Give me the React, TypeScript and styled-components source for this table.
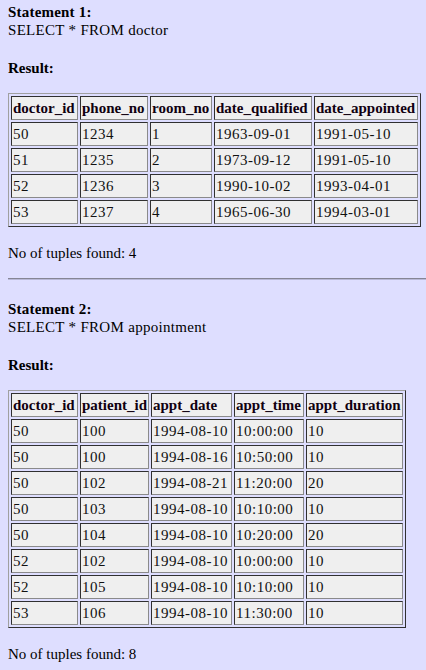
import React from "react";
import styled, { createGlobalStyle } from "styled-components";

const Global = createGlobalStyle`
  html, body {
    margin: 0;
    padding: 0;
    background: #dedeff;
  }
  body {
    font-family: "Liberation Serif", "Times New Roman", serif;
    font-size: 15px;
    line-height: 18px;
    color: #000;
  }
`;

const Page = styled.div`
  padding: 3px 0 0 8px;
`;

const Section = styled.section`
  display: flex;
  flex-direction: column;
  align-items: flex-start;
`;

const Heading = styled.div`
  font-weight: bold;
  letter-spacing: 0.2px;
`;

const Query = styled.div`
  letter-spacing: 0.3px;
`;

const ResultLabel = styled.div`
  font-weight: bold;
  margin-top: 20px;
`;

const Table = styled.table`
  margin-top: 16px;
  border-collapse: separate;
  border-spacing: 2px;
  border-style: solid;
  border-width: 1px;
  border-color: #a0a0a0 #303030 #303030 #a0a0a0;
  background: transparent;
`;

const Cell = styled.td<{ $head?: boolean; $w?: number }>`
  background: #efefef;
  border-style: solid;
  border-width: 1px;
  border-color: #303030 #8a8a8a #8a8a8a #303030;
  padding: 2px 1px;
  height: 18px;
  box-sizing: content-box;
  width: ${(p) => (p.$w ? `${p.$w}px` : "auto")};
  text-align: left;
  white-space: nowrap;
  letter-spacing: ${(p) => (p.$head ? "0" : "0.5px")};
  font-weight: ${(p) => (p.$head ? "bold" : "normal")};
  color: ${(p) => (p.$head ? "#100010" : "#111")};
`;

const Count = styled.div`
  margin-top: 17px;
`;

const Rule = styled.hr`
  align-self: stretch;
  margin: 16px 0 20px 0;
  height: 0;
  border: none;
  border-top: 1px solid #858595;
  border-bottom: 1px solid #b8b8d8;
`;

type Stmt = {
  n: number;
  sql: string;
  cols: string[];
  widths: number[];
  rows: string[][];
};

const statements: Stmt[] = [
  {
    n: 1,
    sql: "SELECT * FROM doctor",
    cols: ["doctor_id", "phone_no", "room_no", "date_qualified", "date_appointed"],
    widths: [63, 64, 58, 94, 100],
    rows: [
      ["50", "1234", "1", "1963-09-01", "1991-05-10"],
      ["51", "1235", "2", "1973-09-12", "1991-05-10"],
      ["52", "1236", "3", "1990-10-02", "1993-04-01"],
      ["53", "1237", "4", "1965-06-30", "1994-03-01"],
    ],
  },
  {
    n: 2,
    sql: "SELECT * FROM appointment",
    cols: ["doctor_id", "patient_id", "appt_date", "appt_time", "appt_duration"],
    widths: [63, 65, 77, 66, 91],
    rows: [
      ["50", "100", "1994-08-10", "10:00:00", "10"],
      ["50", "100", "1994-08-16", "10:50:00", "10"],
      ["50", "102", "1994-08-21", "11:20:00", "20"],
      ["50", "103", "1994-08-10", "10:10:00", "10"],
      ["50", "104", "1994-08-10", "10:20:00", "20"],
      ["52", "102", "1994-08-10", "10:00:00", "10"],
      ["52", "105", "1994-08-10", "10:10:00", "10"],
      ["53", "106", "1994-08-10", "11:30:00", "10"],
    ],
  },
];

function Statement({ s, last }: { s: Stmt; last: boolean }) {
  return (
    <Section>
      <Heading>Statement {s.n}:</Heading>
      <Query>{s.sql}</Query>
      <ResultLabel>Result:</ResultLabel>
      <Table>
        <tbody>
          <tr>
            {s.cols.map((c, j) => (
              <Cell as="th" $head $w={s.widths[j]} key={c}>
                {c}
              </Cell>
            ))}
          </tr>
          {s.rows.map((r, i) => (
            <tr key={i}>
              {r.map((v, j) => (
                <Cell key={j}>{v}</Cell>
              ))}
            </tr>
          ))}
        </tbody>
      </Table>
      <Count>No of tuples found: {s.rows.length}</Count>
      {!last && <Rule />}
    </Section>
  );
}

export default function App() {
  return (
    <Page>
      <Global />
      {statements.map((s, i) => (
        <Statement key={s.n} s={s} last={i === statements.length - 1} />
      ))}
    </Page>
  );
}
